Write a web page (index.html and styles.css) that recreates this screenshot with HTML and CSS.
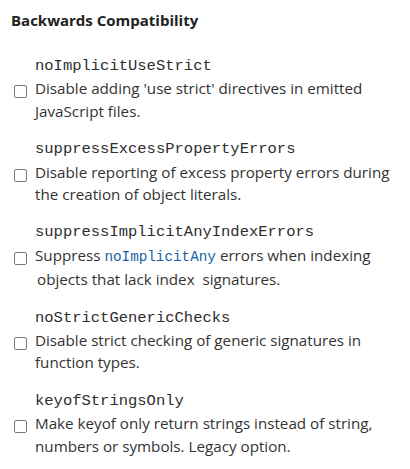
FILE: index.html
```html
<!DOCTYPE html>
<html lang="en">
<head>
<meta charset="utf-8">
<title>Backwards Compatibility</title>
<link rel="stylesheet" href="styles.css">
</head>
<body>
<section class="panel">
  <h4 class="title">Backwards Compatibility</h4>
  <ul class="options">
    <li class="option">
      <span class="name">noImplicitUseStrict</span>
      <span class="box"></span>
      <p class="desc">Disable adding 'use strict' directives in emitted JavaScript files.</p>
    </li>
    <li class="option">
      <span class="name">suppressExcessPropertyErrors</span>
      <span class="box"></span>
      <p class="desc">Disable reporting of excess property errors during the creation of object literals.</p>
    </li>
    <li class="option">
      <span class="name">suppressImplicitAnyIndexErrors</span>
      <span class="box"></span>
      <p class="desc">Suppress <code class="ref">noImplicitAny</code> errors when indexing<br><span class="indent">objects that lack index&nbsp; signatures.</span></p>
    </li>
    <li class="option">
      <span class="name">noStrictGenericChecks</span>
      <span class="box"></span>
      <p class="desc">Disable strict checking of generic signatures in function types.</p>
    </li>
    <li class="option">
      <span class="name">keyofStringsOnly</span>
      <span class="box"></span>
      <p class="desc">Make keyof only return strings instead of string, numbers or symbols. Legacy option.</p>
    </li>
  </ul>
</section>
</body>
</html>
```

FILE: styles.css
```css
html, body {
  margin: 0;
  padding: 0;
  background: #ffffff;
}

body {
  font-family: "Open Sans", "Noto Sans", sans-serif;
  color: #333333;
}

.panel {
  padding: 10px 10px 0 11px;
  width: 380px;
}

.title {
  margin: 0 0 25px 0;
  font-size: 15px;
  line-height: 20px;
  font-weight: 700;
  color: #222222;
}

.options {
  list-style: none;
  margin: 0;
  padding: 0;
  display: flex;
  flex-direction: column;
  gap: 16px;
}

.option {
  display: grid;
  grid-template-columns: 24px 1fr;
  grid-template-areas:
    ". name"
    "box desc";
}

.name {
  grid-area: name;
  font-family: "Liberation Mono", "DejaVu Sans Mono", monospace;
  font-size: 15.5px;
  line-height: 22.4px;
  color: #2e2e2e;
}

.box {
  grid-area: box;
  margin: 8px 0 0 2.5px;
  width: 11px;
  height: 11px;
  border: 1.5px solid #7a7a82;
  border-radius: 2px;
  background: #ffffff;
}

.desc {
  grid-area: desc;
  margin: 0;
  font-size: 15.2px;
  line-height: 22.4px;
  color: #333333;
}

.ref {
  font-family: "Liberation Mono", "DejaVu Sans Mono", monospace;
  font-size: 14.3px;
  color: #1a5fa8;
}

.indent {
  padding-left: 2px;
}
```
